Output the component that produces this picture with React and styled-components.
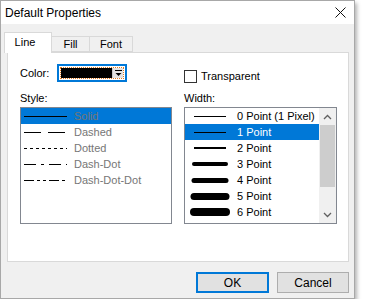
import React from 'react';
import styled, { createGlobalStyle } from 'styled-components';

const GlobalStyle = createGlobalStyle`
  html, body {
    margin: 0;
    padding: 0;
    background: #ffffff;
  }
  body {
    font-family: "Liberation Sans", Arial, sans-serif;
    font-size: 11px;
    color: #000;
  }
`;

const Window = styled.div`
  width: 355px;
  box-sizing: border-box;
  border: 1px solid #a8a8a8;
  background: #f0f0f0;
  box-shadow: 2px 3px 4px rgba(0, 0, 0, 0.3);
  display: flex;
  flex-direction: column;
`;

const TitleBar = styled.div`
  height: 23px;
  background: #fff;
  display: flex;
  align-items: center;
  justify-content: space-between;
  padding: 0 8px 0 4px;
  font-size: 12px;
`;

const CloseBox = styled.div`
  width: 12px;
  height: 12px;
  display: flex;
  align-items: center;
  justify-content: center;
`;

const Body = styled.div`
  padding: 8px 5px 5px 3px;
  display: flex;
  flex-direction: column;
`;

const TabStrip = styled.div`
  display: flex;
  align-items: flex-end;
  height: 20px;
  position: relative;
  z-index: 1;
`;

const Tab = styled.div`
  box-sizing: border-box;
  width: ${p => p.w}px;
  height: ${p => (p.active ? 21 : 16)}px;
  margin-bottom: ${p => (p.active ? -1 : 0)}px;
  margin-left: ${p => (p.first ? 0 : -1)}px;
  border: 1px solid #d9d9d9;
  border-bottom: ${p => (p.active ? 'none' : '1px solid #d9d9d9')};
  background: ${p => (p.active ? '#fff' : '#f0f0f0')};
  display: flex;
  align-items: center;
  justify-content: center;
  padding-right: ${p => (p.active ? 6 : 0)}px;
  padding-bottom: ${p => (p.active ? 2 : 0)}px;
`;

const Panel = styled.div`
  margin-left: 3px;
  box-sizing: border-box;
  height: 210px;
  border: 1px solid #d9d9d9;
  background: #fff;
  padding: 11px 11px 0 12px;
  display: grid;
  grid-template-columns: 152px 153px;
  grid-template-rows: 18px 25px 117px;
  column-gap: 12px;
`;

const ColorRow = styled.div`
  display: flex;
  align-items: center;
`;

const FieldLabel = styled.span`
  width: 37px;
`;

const Combo = styled.div`
  box-sizing: border-box;
  width: 70px;
  height: 18px;
  border: 2px solid #0078d7;
  padding: 1px;
  display: flex;
`;

const FocusRing = styled.div`
  flex: 1;
  display: flex;
  border: 1px dotted #e07b22;
`;

const Swatch = styled.div`
  flex: 1;
  background: #000;
`;

const DropButton = styled.div`
  width: 10px;
  background: #e3e3e3;
  border-left: 1px solid #c8c8c8;
  display: flex;
  align-items: center;
  justify-content: center;
`;

const CheckRow = styled.div`
  display: flex;
  align-items: center;
  gap: 4px;
  padding-top: 6px;
`;

const CheckBox = styled.span`
  box-sizing: border-box;
  width: 13px;
  height: 13px;
  border: 1px solid #333;
  background: #fff;
`;

const SectionLabel = styled.div`
  align-self: end;
  margin-bottom: 3px;
`;

const ListBox = styled.div`
  box-sizing: border-box;
  border: 1px solid #828790;
  background: #fff;
  display: flex;
  overflow: hidden;
`;

const Items = styled.div`
  flex: 1;
  display: flex;
  flex-direction: column;
`;

const Item = styled.div`
  height: 16px;
  display: flex;
  align-items: center;
  gap: 7px;
  padding-left: ${p => p.indent}px;
  background: ${p => (p.selected ? '#0078d7' : 'transparent')};
  color: ${p => p.textColor};
`;

const Sample = styled.svg`
  flex: none;
  display: block;
`;

const ScrollBar = styled.div`
  width: 17px;
  background: #f0f0f0;
  display: flex;
  flex-direction: column;
`;

const ScrollArrow = styled.div`
  height: 17px;
  display: flex;
  align-items: center;
  justify-content: center;
`;

const Track = styled.div`
  flex: 1;
  display: flex;
  flex-direction: column;
`;

const Thumb = styled.div`
  height: 62px;
  margin: 0 1px;
  background: #cdcdcd;
`;

const ButtonRow = styled.div`
  display: flex;
  justify-content: flex-end;
  gap: 8px;
  margin-top: 10px;
`;

const Button = styled.div`
  box-sizing: border-box;
  width: ${p => p.w}px;
  height: 21px;
  background: #e1e1e1;
  border: ${p => (p.primary ? '2px solid #0078d7' : '1px solid #adadad')};
  display: flex;
  align-items: center;
  justify-content: center;
  font-size: 12px;
`;

const styles = [
  { name: 'Solid', dash: null, selected: true },
  { name: 'Dashed', dash: '17 7' },
  { name: 'Dotted', dash: '3 3' },
  { name: 'Dash-Dot', dash: '12 5 3 5' },
  { name: 'Dash-Dot-Dot', dash: '10 3 3 3 3 3' },
];

const widths = [
  { name: '0 Point (1 Pixel)', w: 1 },
  { name: '1 Point', w: 1, selected: true },
  { name: '2 Point', w: 2 },
  { name: '3 Point', w: 4 },
  { name: '4 Point', w: 5 },
  { name: '5 Point', w: 7 },
  { name: '6 Point', w: 8 },
];

function Chevron({ up }) {
  return (
    <svg width="9" height="6" viewBox="0 0 9 6">
      <path
        d={up ? 'M1 5 L4.5 1.5 L8 5' : 'M1 1 L4.5 4.5 L8 1'}
        fill="none"
        stroke="#606060"
        strokeWidth="1.3"
      />
    </svg>
  );
}

export default function App() {
  return (
    <>
      <GlobalStyle />
      <Window>
        <TitleBar>
          <span>Default Properties</span>
          <CloseBox>
            <svg width="11" height="11" viewBox="0 0 11 11">
              <path d="M0.5 0.5 L10.5 10.5 M10.5 0.5 L0.5 10.5" stroke="#111" strokeWidth="1" />
            </svg>
          </CloseBox>
        </TitleBar>
        <Body>
          <TabStrip>
            <Tab first active w={48}>Line</Tab>
            <Tab w={39}>Fill</Tab>
            <Tab w={44}>Font</Tab>
          </TabStrip>
          <Panel>
            <ColorRow>
              <FieldLabel>Color:</FieldLabel>
              <Combo>
                <FocusRing>
                  <Swatch />
                  <DropButton>
                    <svg width="7" height="7" viewBox="0 0 7 7">
                      <rect x="0" y="0" width="7" height="1" fill="#000" />
                      <path d="M0.5 3 L6.5 3 L3.5 6 Z" fill="#000" />
                    </svg>
                  </DropButton>
                </FocusRing>
              </Combo>
            </ColorRow>
            <CheckRow>
              <CheckBox />
              <span>Transparent</span>
            </CheckRow>
            <SectionLabel>Style:</SectionLabel>
            <SectionLabel>Width:</SectionLabel>
            <ListBox>
              <Items>
                {styles.map(s => (
                  <Item key={s.name} indent={3} selected={s.selected} textColor="#767676">
                    <Sample width="43" height="4" viewBox="0 0 43 4">
                      <line
                        x1="0"
                        y1="2.5"
                        x2="43"
                        y2="2.5"
                        stroke="#000"
                        strokeWidth="1"
                        strokeDasharray={s.dash || undefined}
                      />
                    </Sample>
                    <span>{s.name}</span>
                  </Item>
                ))}
              </Items>
            </ListBox>
            <ListBox>
              <Items>
                {widths.map(w => (
                  <Item
                    key={w.name}
                    indent={5}
                    selected={w.selected}
                    textColor={w.selected ? '#fff' : '#000'}
                  >
                    <Sample width="40" height="10" viewBox="0 0 40 10">
                      <line
                        x1="4"
                        y1={w.w % 2 ? 5.5 : 5}
                        x2="36"
                        y2={w.w % 2 ? 5.5 : 5}
                        stroke="#000"
                        strokeWidth={w.w}
                        strokeLinecap={w.w > 2 ? 'round' : 'butt'}
                      />
                    </Sample>
                    <span>{w.name}</span>
                  </Item>
                ))}
              </Items>
              <ScrollBar>
                <ScrollArrow><Chevron up /></ScrollArrow>
                <Track>
                  <Thumb />
                </Track>
                <ScrollArrow><Chevron /></ScrollArrow>
              </ScrollBar>
            </ListBox>
          </Panel>
          <ButtonRow>
            <Button primary w={73}>OK</Button>
            <Button w={72}>Cancel</Button>
          </ButtonRow>
        </Body>
      </Window>
    </>
  );
}
